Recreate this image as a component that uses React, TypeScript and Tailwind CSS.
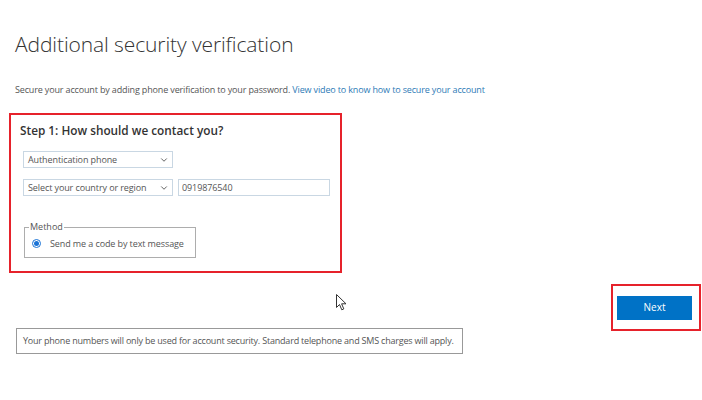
import { ChevronDown } from "lucide-react";

const font = "font-['Segoe_UI','Open_Sans',sans-serif]";

function FakeSelect({ label, width }: { label: string; width: string }) {
  return (
    <div
      className={`${width} h-[17px] border border-[#c9d7e3] bg-white flex items-center justify-between pl-[4px] pr-[3px] text-[9px] tracking-[-0.1px] text-[#555]`}
    >
      <span>{label}</span>
      <ChevronDown size={10} strokeWidth={2.2} className="text-[#555]" />
    </div>
  );
}

export default function App() {
  return (
    <div className={`relative w-[702px] h-[400px] bg-white overflow-hidden ${font}`}>
      <div className="pl-[15px] pt-[29px]">
        {/* Header */}
        <h1 className="text-[21px] font-light leading-[30px] text-[#333] tracking-[-0.1px]">
          Additional security verification
        </h1>
        <p className="mt-[24px] text-[9px] leading-[14px] tracking-[-0.15px] text-[#555] whitespace-nowrap">
          Secure your account by adding phone verification to your password.{" "}
          <span className="text-[#2e7bb6]">View video to know how to secure your account</span>
        </p>

        {/* Step 1 */}
        <div className="ml-[-6px] mt-[16px] w-[333px] h-[160px] border-2 border-[#e6222b] pl-[9px] pt-[7px]">
          <h2 className="text-[11.8px] font-semibold leading-[16px] text-[#333]">
            Step 1: How should we contact you?
          </h2>
          <div className="ml-[3px] mt-[13px]">
            <FakeSelect label="Authentication phone" width="w-[150px]" />
            <div className="mt-[11px] flex gap-[5px]">
              <FakeSelect label="Select your country or region" width="w-[150px]" />
              <div className="w-[152px] h-[17px] border border-[#c9d7e3] pl-[3px] text-[9px] leading-[15px] tracking-[-0.1px] text-[#555]">
                0919876540
              </div>
            </div>
          </div>

          <fieldset className="ml-[4px] mt-[26px] w-[172px] h-[36px] border border-[#adadad] px-[4px]">
            <legend className="text-[9px] leading-[10px] text-[#555] px-[1px]">Method</legend>
            <div className="flex items-center mt-[5px] ml-[3px]">
              <span className="w-[9px] h-[9px] rounded-full border border-[#1a73d6] flex items-center justify-center">
                <span className="w-[5px] h-[5px] rounded-full bg-[#1a73d6]" />
              </span>
              <span className="ml-[9px] text-[9px] tracking-[-0.1px] text-[#555]">Send me a code by text message</span>
            </div>
          </fieldset>
        </div>

        {/* Next */}
        <div className="mt-[11px] flex justify-end pr-[1px]">
          <div className="w-[90px] h-[47px] border-2 border-[#e6222b] flex items-center justify-center pr-[3px]">
            <button className="w-[75px] h-[24px] bg-[#0072c6] text-white text-[10px]">Next</button>
          </div>
        </div>

        {/* Notice */}
        <div className="ml-[1px] mt-[-3px] w-[447px] h-[26px] border border-[#999] flex items-center pl-[6px] text-[9px] tracking-[-0.2px] text-[#555] whitespace-nowrap">
          Your phone numbers will only be used for account security. Standard telephone and SMS charges will apply.
        </div>
      </div>

      {/* Mouse cursor */}
      <svg className="absolute left-[336px] top-[294px]" width="11" height="17" viewBox="0 0 11 17">
        <path d="M0.5 0.5 L0.5 13.5 L3.5 10.5 L5.8 15.8 L7.8 14.9 L5.6 9.8 L10 9.8 Z" fill="white" stroke="#333" strokeWidth="1" strokeLinejoin="round" />
      </svg>
    </div>
  );
}
